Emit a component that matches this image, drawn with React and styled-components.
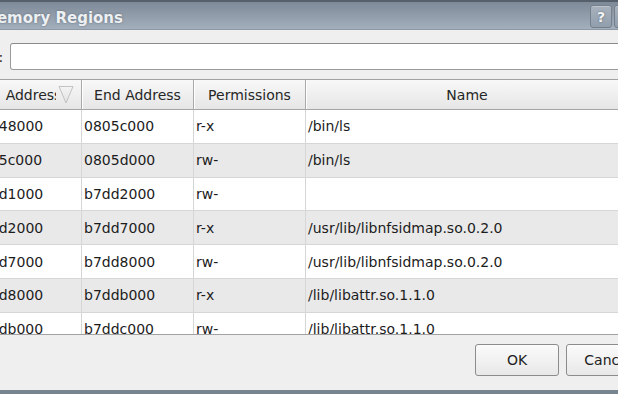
import React from 'react';
import styled, { createGlobalStyle } from 'styled-components';

const Global = createGlobalStyle`
  html, body { margin: 0; padding: 0; background: #efefef; }
  body { width: 618px; height: 394px; overflow: hidden; font-family: "DejaVu Sans", "Liberation Sans", sans-serif; }
`;

const Viewport = styled.div`
  width: 618px;
  height: 394px;
  overflow: hidden;
  background: #efefef;
`;

const Dialog = styled.div`
  margin-left: -46px;
  width: 706px;
  height: 394px;
  box-sizing: border-box;
  display: flex;
  flex-direction: column;
  border-bottom: 4px solid #78848f;
`;

const TitleBar = styled.div`
  height: 30px;
  box-sizing: border-box;
  border-top: 2px solid #55606c;
  border-bottom: 1px solid #8e99a6;
  background: linear-gradient(#7e8a98, #a4afbd);
  display: flex;
  align-items: center;
  padding: 0 24px 0 28px;
`;

const Title = styled.span`
  margin-top: 5px;
  font-size: 15px;
  font-weight: bold;
  color: #edf0f3;
  text-shadow: 0 0 2px rgba(40, 50, 60, 0.55);
  white-space: nowrap;
`;

const TitleButtons = styled.div`
  margin-left: auto;
  margin-top: 2px;
  display: flex;
  gap: 2px;
`;

const TitleButton = styled.div`
  width: 22px;
  height: 23px;
  box-sizing: border-box;
  border: 1px solid #75808d;
  border-radius: 3px;
  background: linear-gradient(#a8b2be, #929eac);
  box-shadow: inset 0 1px 0 rgba(255, 255, 255, 0.25);
  display: flex;
  align-items: center;
  justify-content: center;
  font-size: 14px;
  font-weight: bold;
  color: #f2f4f6;
  text-shadow: 0 0 2px rgba(40, 50, 60, 0.6);
`;

const Body = styled.div`
  flex: 1;
  display: flex;
  flex-direction: column;
  padding: 13px 9px 0 9px;
  background: #efefef;
`;

const FilterRow = styled.div`
  display: flex;
  align-items: center;
  gap: 7px;
  height: 27px;
`;

const Label = styled.span`
  font-size: 14px;
  color: #1e1e1e;
  padding-left: 1px;
`;

const Input = styled.div`
  flex: 1;
  height: 27px;
  box-sizing: border-box;
  border: 1px solid #9a9a9a;
  border-top-color: #8a8a8a;
  border-radius: 3px;
  background: #ffffff;
`;

const Table = styled.div`
  margin-top: 9px;
  height: 256px;
  box-sizing: border-box;
  border: 1px solid #a2a2a2;
  display: flex;
  flex-direction: column;
  background: #ffffff;
`;

const cols = '118px 112px 112px 323px 1fr';

const HeaderRow = styled.div`
  display: grid;
  grid-template-columns: ${cols};
  height: 30px;
  box-sizing: border-box;
  border-bottom: 1px solid #a6a6a6;
  background: linear-gradient(#f8f8f8, #e6e6e6);
`;

const HeaderCell = styled.div`
  display: flex;
  align-items: center;
  justify-content: ${(p) => (p.$left ? 'flex-start' : 'center')};
  padding: ${(p) => (p.$left ? '0 7px 0 0' : '0')};
  gap: 2px;
  border-right: ${(p) => (p.$last ? 'none' : '1px solid #a9a9a9')};
  box-shadow: inset 1px 0 0 #ffffff;
  font-size: 14px;
  color: #262626;
  white-space: nowrap;
  overflow: hidden;
`;

const HeaderText = styled.span`
  flex: ${(p) => (p.$clip ? '1' : 'none')};
  min-width: 0;
  overflow: hidden;
  white-space: nowrap;
  word-spacing: ${(p) => (p.$clip ? '3px' : 'normal')};
`;

const Rows = styled.div`
  flex: 1;
  overflow: hidden;
`;

const Row = styled.div`
  display: grid;
  grid-template-columns: ${cols};
  height: 33.8px;
  box-sizing: border-box;
  border-bottom: 1px solid #d6d6d6;
  background: ${(p) => (p.$alt ? '#e9e9e9' : '#ffffff')};
`;

const Cell = styled.div`
  display: flex;
  align-items: center;
  padding-left: ${(p) => (p.$first ? '8px' : '2px')};
  border-right: ${(p) => (p.$last ? 'none' : '1px solid #d6d6d6')};
  font-size: 14px;
  color: #1c1c1c;
  white-space: nowrap;
  overflow: hidden;
`;

const ButtonRow = styled.div`
  margin-top: 9px;
  display: flex;
  justify-content: flex-end;
  gap: 7px;
  padding-right: 1px;
`;

const Button = styled.div`
  width: 84px;
  height: 32px;
  box-sizing: border-box;
  border: 1px solid #8c8c8c;
  border-radius: 3px;
  background: linear-gradient(#fbfbfb, #e8e8e8);
  display: flex;
  align-items: center;
  justify-content: center;
  font-size: 14px;
  color: #222222;
`;

const SortArrow = () => (
  <svg width="16" height="19" viewBox="0 0 16 19" style={{ flex: 'none' }}>
    <defs>
      <linearGradient id="sa" x1="0" y1="0" x2="0" y2="1">
        <stop offset="0" stopColor="#f4f4f4" />
        <stop offset="1" stopColor="#e2e2e2" />
      </linearGradient>
    </defs>
    <polygon points="1,1.5 15,1.5 8,18" fill="url(#sa)" stroke="#c2c2c2" strokeWidth="1" />
  </svg>
);

const rows = [
  ['08048000', '0805c000', 'r-x', '/bin/ls'],
  ['0805c000', '0805d000', 'rw-', '/bin/ls'],
  ['b7dd1000', 'b7dd2000', 'rw-', ''],
  ['b7dd2000', 'b7dd7000', 'r-x', '/usr/lib/libnfsidmap.so.0.2.0'],
  ['b7dd7000', 'b7dd8000', 'rw-', '/usr/lib/libnfsidmap.so.0.2.0'],
  ['b7dd8000', 'b7ddb000', 'r-x', '/lib/libattr.so.1.1.0'],
  ['b7ddb000', 'b7ddc000', 'rw-', '/lib/libattr.so.1.1.0'],
  ['b7ddc000', 'b7de0000', 'rw-', ''],
];

export default function App() {
  return (
    <Viewport>
      <Global />
      <Dialog>
        <TitleBar>
          <Title>Memory Regions</Title>
          <TitleButtons>
            <TitleButton>?</TitleButton>
            <TitleButton>×</TitleButton>
          </TitleButtons>
        </TitleBar>
        <Body>
          <FilterRow>
            <Label>Filter:</Label>
            <Input />
          </FilterRow>
          <Table>
            <HeaderRow>
              <HeaderCell $left>
                <HeaderText $clip>Start Address</HeaderText>
                <SortArrow />
              </HeaderCell>
              <HeaderCell><HeaderText>End Address</HeaderText></HeaderCell>
              <HeaderCell><HeaderText>Permissions</HeaderText></HeaderCell>
              <HeaderCell><HeaderText>Name</HeaderText></HeaderCell>
              <HeaderCell $last />
            </HeaderRow>
            <Rows>
              {rows.map((r, i) => (
                <Row key={i} $alt={i % 2 === 1}>
                  <Cell $first>{r[0]}</Cell>
                  <Cell>{r[1]}</Cell>
                  <Cell>{r[2]}</Cell>
                  <Cell>{r[3]}</Cell>
                  <Cell $last />
                </Row>
              ))}
            </Rows>
          </Table>
          <ButtonRow>
            <Button>OK</Button>
            <Button>Cancel</Button>
          </ButtonRow>
        </Body>
      </Dialog>
    </Viewport>
  );
}
